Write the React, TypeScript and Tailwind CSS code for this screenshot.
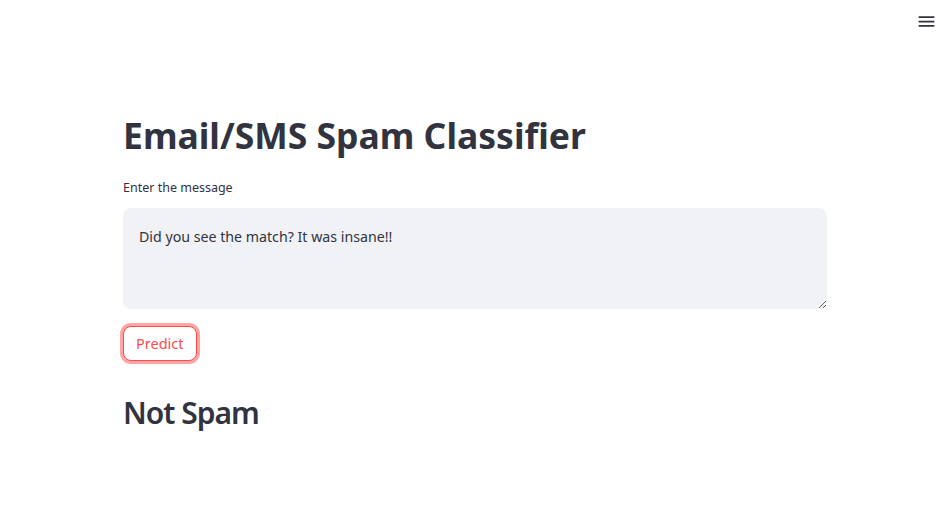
import { useState } from "react"

function MenuIcon() {
    return (
        <svg width="21" height="21" viewBox="0 0 24 24" fill="currentColor" className="text-[#31333f]">
            <path d="M3 18h18v-2H3v2zm0-5h18v-2H3v2zm0-7v2h18V6H3z" />
        </svg>
    )
}

export default function App() {
    const [message, setMessage] = useState("Did you see the match? It was insane!!")

    return (
        <div className="relative min-h-[519px] w-full bg-white text-[#31333f]" style={{ fontFamily: '"Noto Sans", "Open Sans", sans-serif' }}>
            <button className="absolute right-0 top-[11px] flex">
                <MenuIcon />
            </button>
            <div className="ml-[123px] w-[704px] pt-[114px]">
                <h1 className="text-[35.5px] font-bold leading-[43px]">Email/SMS Spam Classifier</h1>
                <label className="mt-[21px] block text-[12.5px] leading-[20px]">Enter the message</label>
                <textarea
                    value={message}
                    onChange={(e) => setMessage(e.target.value)}
                    className="mt-[10px] block h-[101px] w-full resize-y rounded-[8px] bg-[#f0f2f6] pl-4 pr-4 pt-[17px] text-[14.2px] leading-[24px] outline-none"
                />
                <button className="mt-[17px] block rounded-[8px] border border-[#ff4b4b] bg-white px-[12px] py-1 text-[14.5px] leading-[25px] text-[#ff4b4b] ring-[3px] ring-[#ff4b4b]/50">
                    Predict
                </button>
                <h2 className="mt-[33px] text-[30px] font-semibold leading-[37px] tracking-[-1px]">Not Spam</h2>
            </div>
        </div>
    )
}
